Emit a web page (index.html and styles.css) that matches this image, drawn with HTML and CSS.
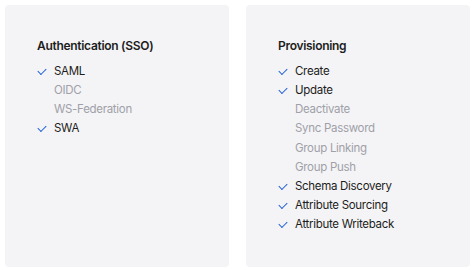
FILE: index.html
```html
<!DOCTYPE html>
<html lang="en">
<head>
    <meta charset="UTF-8">
    <meta name="viewport" content="width=device-width, initial-scale=1.0">
    <title>Capabilities</title>
    <link rel="stylesheet" href="styles.css">
</head>
<body>
    <div class="features">
        <div class="card">
            <h3>Authentication (SSO)</h3>
            <ul class="feature-list">
                <li class="on">SAML</li>
                <li>OIDC</li>
                <li>WS-Federation</li>
                <li class="on">SWA</li>
            </ul>
        </div>
        <div class="card">
            <h3>Provisioning</h3>
            <ul class="feature-list">
                <li class="on">Create</li>
                <li class="on">Update</li>
                <li>Deactivate</li>
                <li>Sync Password</li>
                <li>Group Linking</li>
                <li>Group Push</li>
                <li class="on">Schema Discovery</li>
                <li class="on">Attribute Sourcing</li>
                <li class="on">Attribute Writeback</li>
            </ul>
        </div>
    </div>
</body>
</html>
```

FILE: styles.css
```css
* {
    margin: 0;
    padding: 0;
    box-sizing: border-box;
    font-family: Inter, 'Noto Sans', sans-serif;
}

body {
    background: #ffffff;
    padding: 5px 4px 3px 5px;
    height: 270px;
}

.features {
    display: grid;
    grid-template-columns: 1fr 1fr;
    gap: 17px;
    height: 100%;
}

.card {
    background: #f4f4f6;
    border-radius: 4px;
    padding: 33px 20px 20px 32px;
}

.card h3 {
    font-size: 12px;
    font-weight: 600;
    letter-spacing: -0.3px;
    color: #1d1d21;
    line-height: 16px;
    margin-bottom: 8px;
}

.feature-list {
    list-style: none;
}

.feature-list li {
    font-size: 11.5px;
    letter-spacing: -0.3px;
    line-height: 19.15px;
    color: #a0a0a8;
    padding-left: 17px;
    position: relative;
}

.feature-list li.on {
    color: #1d1d21;
}

.feature-list li.on::before {
    content: "";
    position: absolute;
    left: 1px;
    top: 6px;
    width: 7px;
    height: 4px;
    border-left: 1.5px solid #2160d8;
    border-bottom: 1.5px solid #2160d8;
    transform: rotate(-45deg);
}
```
